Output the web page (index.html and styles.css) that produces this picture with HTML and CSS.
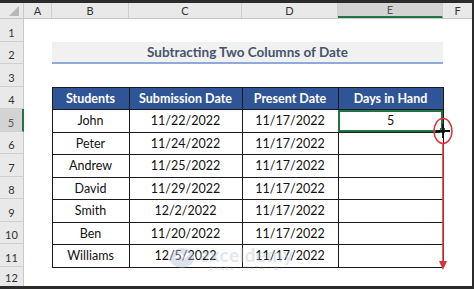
FILE: index.html
```html
<!DOCTYPE html>
<html>
<head>
<meta charset="utf-8">
<link rel="stylesheet" href="styles.css">
</head>
<body>
<div class="frame">
  <div class="colheads">
    <div class="corner"><svg width="24" height="16" viewBox="0 0 24 16"><polygon points="19,3 19,13 9,13" fill="#b8b8b8"/></svg></div>
    <div class="ch w-a">A</div>
    <div class="ch w-b">B</div>
    <div class="ch w-c">C</div>
    <div class="ch w-d">D</div>
    <div class="ch w-e sel">E</div>
    <div class="ch w-f">F</div>
  </div>
  <div class="body">
    <div class="rowheads">
      <div class="rh">1</div>
      <div class="rh">2</div>
      <div class="rh">3</div>
      <div class="rh">4</div>
      <div class="rh sel">5</div>
      <div class="rh">6</div>
      <div class="rh">7</div>
      <div class="rh">8</div>
      <div class="rh">9</div>
      <div class="rh">10</div>
      <div class="rh">11</div>
      <div class="rh last">12</div>
    </div>
    <div class="canvas">
      <div class="title">Subtracting Two Columns of Date</div>
      <table class="data">
        <colgroup><col class="cb"><col class="cc"><col class="cd"><col class="ce"></colgroup>
        <thead>
          <tr><th>Students</th><th>Submission Date</th><th>Present Date</th><th>Days in Hand</th></tr>
        </thead>
        <tbody>
          <tr><td>John</td><td>11/22/2022</td><td>11/17/2022</td><td class="active">5</td></tr>
          <tr><td>Peter</td><td>11/24/2022</td><td>11/17/2022</td><td></td></tr>
          <tr><td>Andrew</td><td>11/25/2022</td><td>11/17/2022</td><td></td></tr>
          <tr><td>David</td><td>11/29/2022</td><td>11/17/2022</td><td></td></tr>
          <tr><td>Smith</td><td>12/2/2022</td><td>11/17/2022</td><td></td></tr>
          <tr><td>Ben</td><td>11/20/2022</td><td>11/17/2022</td><td></td></tr>
          <tr><td>Williams</td><td>12/5/2022</td><td>11/17/2022</td><td></td></tr>
        </tbody>
      </table>
      <div class="watermark">
        <svg class="wm-logo" width="26" height="22" viewBox="0 0 26 22"><ellipse cx="13" cy="11" rx="12" ry="10" fill="#a9bbd4"/><path d="M6 12 L11 7 L15 11 L20 6" stroke="#fff" stroke-width="2" fill="none"/></svg>
        <div class="wm-text">
          <div class="wm-name">exceldemy</div>
          <div class="wm-sub">EXCEL · DATA · BI</div>
        </div>
      </div>
      <svg class="handle" width="30" height="170" viewBox="0 0 30 170">
        <ellipse cx="15" cy="23" rx="9" ry="12.5" fill="none" stroke="#e0343c" stroke-width="1.6"/>
        <rect x="12" y="20" width="5" height="5" fill="#217346"/>
        <path d="M15 16 V30 M8 23 H22" stroke="#111" stroke-width="1.8"/>
        <path d="M15 36 V155" stroke="#d9343c" stroke-width="1.6"/>
        <polygon points="11,153 19,153 15,162" fill="#d9343c"/>
      </svg>
    </div>
  </div>
</div>
</body>
</html>
```
FILE: styles.css
```css
* { box-sizing: border-box; }
html, body { margin: 0; padding: 0; }
body { width: 474px; height: 289px; background: #2b2b2b; overflow: hidden; }
.frame {
  width: 472px;
  height: 283px;
  margin-top: 3px;
  background: #fff;
  font-family: Lato, "Open Sans", sans-serif;
  display: flex;
  flex-direction: column;
  overflow: hidden;
}
.colheads { display: flex; height: 16px; background: #e9e9e9; border-bottom: 1px solid #c8c8c8; }
.corner { width: 24px; border-right: 1px solid #c8c8c8; }
.corner svg { display: block; }
.ch {
  border-right: 1px solid #cfcfcf;
  font-size: 11px;
  color: #333;
  text-align: center;
  line-height: 15px;
}
.ch.sel { background: #d3d3d3; border-bottom: 2px solid #217346; color: #555; line-height: 14px; }
.w-a { width: 28px; }
.w-b { width: 77px; }
.w-c { width: 113px; }
.w-d { width: 96px; }
.w-e { width: 105px; }
.w-f { flex: 1; border-right: none; }
.body { display: flex; flex: 1; }
.rowheads { width: 24px; display: flex; flex-direction: column; background: #e9e9e9; border-right: 1px solid #c8c8c8; }
.rh {
  height: 22.5px;
  flex: none;
  border-bottom: 1px solid #cfcfcf;
  font-size: 11px;
  color: #333;
  display: flex;
  align-items: flex-end;
  justify-content: center;
  padding-bottom: 2px;
}
.rh.sel { background: #d3d3d3; border-right: 2px solid #217346; margin-right: -1px; color: #555; }
.rh.last { border-bottom: none; flex: 1; }
.canvas { position: relative; flex: 1; padding: 22.5px 0 0 28px; }
.title {
  width: 391px;
  height: 22.5px;
  background: #f1f1f1;
  border-bottom: 2px solid #8eaadb;
  text-align: center;
  font-weight: 700;
  font-size: 13.5px;
  color: #44546a;
  line-height: 21px;
}
.data {
  margin-top: 22.5px;
  border-collapse: collapse;
  table-layout: fixed;
  width: 392px;
  margin-left: -0.5px;
}
.cb { width: 77px; }
.cc { width: 113px; }
.cd { width: 96px; }
.ce { width: 105px; }
.data th, .data td {
  height: 22.5px;
  padding: 0;
  border: 1px solid #1a1a1a;
  text-align: center;
  font-size: 12.5px;
  white-space: nowrap;
}
.data th {
  background: #2f5597;
  color: #fff;
  font-weight: 700;
  font-size: 12.5px;
  border-color: #1a1a1a;
}
.data td { color: #111; }
.data td.active { outline: 2px solid #217346; outline-offset: -2px; }
.watermark {
  position: absolute;
  left: 145px;
  top: 226px;
  display: flex;
  align-items: center;
  gap: 4px;
  opacity: 0.4;
}
.wm-text { display: flex; flex-direction: column; align-items: center; }
.wm-name { font-size: 19px; font-weight: 700; color: #b7c4d8; line-height: 19px; letter-spacing: 0.5px; }
.wm-sub { font-size: 6px; color: #9aa7ba; letter-spacing: 1.5px; }
.handle { position: absolute; left: 404px; top: 89px; }
```
